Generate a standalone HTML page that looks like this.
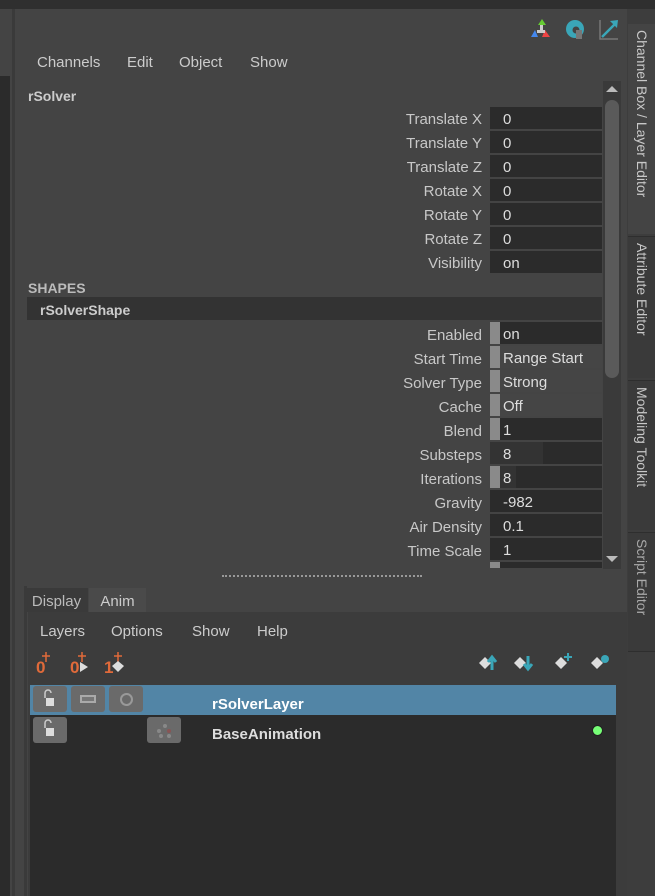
<!DOCTYPE html><html><head><style>
*{margin:0;padding:0;box-sizing:border-box}
body{width:655px;height:896px;background:#444;font-family:"Liberation Sans",sans-serif;color:#ccc;position:relative;overflow:hidden;font-size:15px}
.a{position:absolute}
.lbl{position:absolute;right:173px;width:200px;text-align:right;color:#c8c8c8;margin-top:2px}
.fld{position:absolute;left:490px;width:112px;height:22px;background:#2b2b2b;padding-left:13px;line-height:25px;color:#ddd;overflow:hidden}
.ind{position:absolute;left:0;top:0;width:10px;height:22px;background:#8a8a8a}
.rt{position:absolute;left:628px;width:27px;writing-mode:vertical-rl;font-size:14px;color:#c8c8c8;padding-top:6px;text-align:left;line-height:27px}
.btn{position:absolute;width:34px;height:26px;background:#6a6a6a;border-radius:3px}
</style></head><body>
<div class="a" style="left:0;top:0;width:655px;height:9px;background:#2f2f2f"></div>
<div class="a" style="left:0;top:76px;width:10px;height:820px;background:#2b2b2b"></div>
<div class="a" style="left:12px;top:9px;width:3px;height:887px;background:#3a3a3a"></div>
<svg class="a" style="left:528px;top:17px" width="95" height="24">
<polygon points="14,2 18,8 10,8" fill="#6c3"/><rect x="12" y="8" width="3" height="6" fill="#ccc"/>
<polygon points="3,20 7,13 10,20" fill="#48e"/><polygon points="17,13 22,20 14,20" fill="#e44"/><rect x="9" y="13" width="8" height="3" fill="#ccc"/>
<circle cx="47" cy="12" r="9" fill="#3aa6b8"/><circle cx="48" cy="13" r="3.5" fill="#444"/><rect x="48" y="13" width="6" height="9" fill="#777"/>
<path d="M72 3 V22 H90" stroke="#777" stroke-width="1.5" fill="none"/><path d="M74 20 L87 7" stroke="#3aa6b8" stroke-width="2.5"/><polygon points="82,4 90,3 89,11" fill="#3aa6b8"/>
</svg>
<div class="a" style="left:37px;top:54px">Channels</div>
<div class="a" style="left:127px;top:54px">Edit</div>
<div class="a" style="left:179px;top:54px">Object</div>
<div class="a" style="left:250px;top:54px">Show</div>
<div class="a" style="left:28px;top:88px;font-weight:bold;font-size:14px">rSolver</div>
<div class="lbl" style="top:109px">Translate X</div><div class="fld" style="top:107px">0</div>
<div class="lbl" style="top:133px">Translate Y</div><div class="fld" style="top:131px">0</div>
<div class="lbl" style="top:157px">Translate Z</div><div class="fld" style="top:155px">0</div>
<div class="lbl" style="top:181px">Rotate X</div><div class="fld" style="top:179px">0</div>
<div class="lbl" style="top:205px">Rotate Y</div><div class="fld" style="top:203px">0</div>
<div class="lbl" style="top:229px">Rotate Z</div><div class="fld" style="top:227px">0</div>
<div class="lbl" style="top:253px">Visibility</div><div class="fld" style="top:251px">on</div>
<div class="a" style="left:28px;top:280px;font-weight:bold;font-size:14px;color:#bbb">SHAPES</div>
<div class="a" style="left:27px;top:297px;width:575px;height:23px;background:#333;padding-left:13px;font-weight:bold;font-size:14px;line-height:27px">rSolverShape</div>
<div class="lbl" style="top:325px">Enabled</div><div class="fld" style="top:322px"><div class="ind"></div>on</div>
<div class="lbl" style="top:349px">Start Time</div><div class="fld" style="top:346px;background:#454545"><div class="ind"></div>Range Start</div>
<div class="lbl" style="top:373px">Solver Type</div><div class="fld" style="top:370px;background:#454545"><div class="ind"></div>Strong</div>
<div class="lbl" style="top:397px">Cache</div><div class="fld" style="top:394px;background:#454545"><div class="ind"></div>Off</div>
<div class="lbl" style="top:421px">Blend</div><div class="fld" style="top:418px"><div class="ind"></div>1</div>
<div class="lbl" style="top:445px">Substeps</div><div class="fld" style="top:442px"><div class="a" style="left:0;top:0;width:53px;height:22px;background:#333"></div><span style="position:relative">8</span></div>
<div class="lbl" style="top:469px">Iterations</div><div class="fld" style="top:466px"><div class="a" style="left:0;top:0;width:26px;height:22px;background:#333"></div><div class="ind"></div><span style="position:relative">8</span></div>
<div class="lbl" style="top:493px">Gravity</div><div class="fld" style="top:490px">-982</div>
<div class="lbl" style="top:517px">Air Density</div><div class="fld" style="top:514px">0.1</div>
<div class="lbl" style="top:541px">Time Scale</div><div class="fld" style="top:538px">1</div>
<div class="fld" style="top:562px;height:6px"><div class="ind" style="height:6px"></div></div>
<div class="a" style="left:603px;top:81px;width:18px;height:488px;background:#3a3a3a"></div>
<div class="a" style="left:605px;top:100px;width:14px;height:278px;background:#5a5a5a;border-radius:7px"></div>
<div class="a" style="left:606px;top:86px;width:0;height:0;border-left:6px solid transparent;border-right:6px solid transparent;border-bottom:6px solid #bbb"></div>
<div class="a" style="left:606px;top:556px;width:0;height:0;border-left:6px solid transparent;border-right:6px solid transparent;border-top:6px solid #bbb"></div>
<div class="a" style="left:222px;top:575px;width:200px;border-top:2px dotted #999"></div>
<div class="a" style="left:24px;top:586px;width:3px;height:310px;background:#3a3a3a"></div>
<div class="a" style="left:28px;top:588px;width:600px;height:308px;background:#3c3c3c"></div>
<div class="a" style="left:27px;top:588px;width:601px;height:24px;background:#444"></div>
<div class="a" style="left:25px;top:588px;width:63px;height:24px;background:#3a3a3a;color:#bbb;text-align:center;line-height:28px">Display</div>
<div class="a" style="left:89px;top:588px;width:57px;height:24px;background:#4a4a4a;text-align:center;line-height:28px">Anim</div>
<div class="a" style="left:40px;top:623px">Layers</div>
<div class="a" style="left:111px;top:623px">Options</div>
<div class="a" style="left:192px;top:623px">Show</div>
<div class="a" style="left:257px;top:623px">Help</div>
<svg class="a" style="left:34px;top:650px" width="100" height="25" font-family="Liberation Sans" font-weight="bold" font-size="17">
<text x="2" y="23" fill="#e06a3a">0</text><path d="M12 2V12M8 6H16" stroke="#e06a3a" stroke-width="1.5"/>
<text x="36" y="23" fill="#e06a3a">0</text><path d="M48 2V12M44 6H52" stroke="#e06a3a" stroke-width="1.5"/><polygon points="46,12 54,17 46,22" fill="#ddd"/>
<text x="70" y="23" fill="#e06a3a">1</text><path d="M84 2V12M80 6H88" stroke="#e06a3a" stroke-width="1.5"/><polygon points="84,11 90,16 84,22 78,16" fill="#ddd"/>
</svg>
<svg class="a" style="left:476px;top:650px" width="140" height="25">
<polygon points="9,7 15,13 9,19 3,13" fill="#ddd"/><path d="M16 20V8M12 12L16 7L20 12" stroke="#3aa6b8" stroke-width="3" fill="none"/>
<polygon points="44,7 50,13 44,19 38,13" fill="#ddd"/><path d="M52 6V18M48 14L52 19L56 14" stroke="#3aa6b8" stroke-width="3" fill="none"/>
<polygon points="85,7 91,13 85,19 79,13" fill="#ddd"/><path d="M92 3V11M88 7H96" stroke="#3aa6b8" stroke-width="2"/>
<polygon points="121,7 127,13 121,19 115,13" fill="#ddd"/><circle cx="129" cy="9" r="4" fill="#3aa6b8"/>
</svg>
<div class="a" style="left:30px;top:685px;width:586px;height:211px;background:#2b2b2b"></div>
<div class="a" style="left:30px;top:685px;width:586px;height:30px;background:#5285a6"></div>
<div class="btn" style="left:33px;top:686px"></div><div class="btn" style="left:71px;top:686px"></div><div class="btn" style="left:109px;top:686px"></div>
<div class="a" style="left:80px;top:695px;width:16px;height:8px;border:2px solid #aaa;background:#777"></div>
<div class="a" style="left:120px;top:693px;width:13px;height:13px;border:2px solid #999;border-radius:50%"></div>
<div class="btn" style="left:33px;top:717px"></div><div class="btn" style="left:147px;top:717px"></div>
<svg class="a" style="left:43px;top:689px" width="16" height="56"><path d="M2 9V4a3 3 0 0 1 6 0" stroke="#ccc" stroke-width="1.5" fill="none"/><rect x="3" y="9" width="8" height="8" fill="#ddd"/><path d="M2 39V34a3 3 0 0 1 6 0" stroke="#ccc" stroke-width="1.5" fill="none"/><rect x="3" y="39" width="8" height="8" fill="#ddd"/></svg>
<svg class="a" style="left:155px;top:723px" width="20" height="16"><circle cx="10" cy="3" r="2" fill="#888"/><circle cx="4" cy="8" r="2" fill="#888"/><circle cx="14" cy="8" r="2" fill="#855"/><circle cx="6" cy="13" r="2" fill="#888"/><circle cx="14" cy="13" r="2" fill="#888"/></svg>
<div class="a" style="left:212px;top:696px;font-weight:bold;color:#fff">rSolverLayer</div>
<div class="a" style="left:212px;top:726px;font-weight:bold;color:#ddd">BaseAnimation</div>
<div class="a" style="left:592px;top:725px;width:11px;height:11px;border-radius:50%;background:#7f7;border:1px solid #222"></div>
<div class="a" style="left:627px;top:9px;width:28px;height:887px;background:#3d3d3d"></div>
<div class="rt" style="top:24px;height:210px;background:#444">Channel Box / Layer Editor</div>
<div class="rt" style="top:236px;height:142px;background:#3a3a3a;border-top:1px solid #2e2e2e">Attribute Editor</div>
<div class="rt" style="top:380px;height:150px;background:#3a3a3a;border-top:1px solid #2e2e2e">Modeling Toolkit</div>
<div class="rt" style="top:532px;height:120px;background:#3a3a3a;border-top:1px solid #2e2e2e;border-bottom:1px solid #2e2e2e;color:#aaa">Script Editor</div>
</body></html>
